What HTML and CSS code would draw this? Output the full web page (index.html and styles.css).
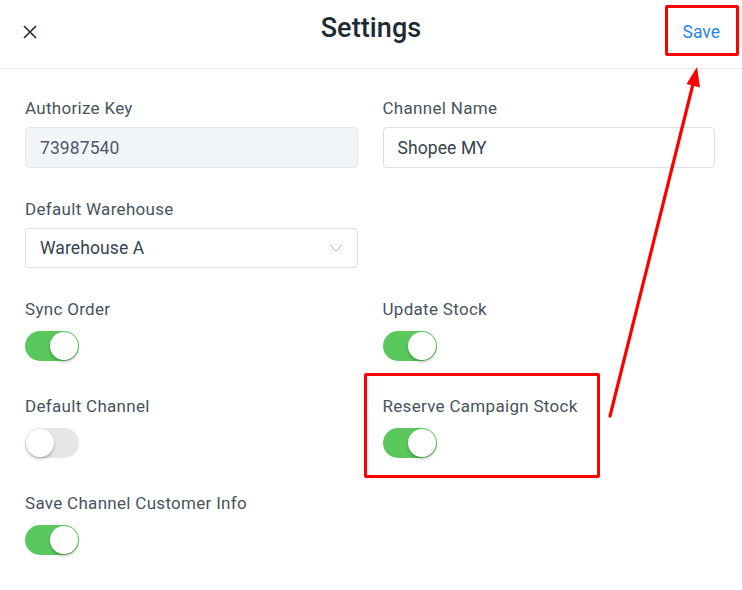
FILE: index.html
```html
<!DOCTYPE html>
<html lang="en">
<head>
	<meta charset="UTF-8">
	<title>Settings</title>
<link rel="stylesheet" href="styles.css">
</head>
<body>
<div id="page">
	<div class="head">
		<span class="close">
			<svg width="16" height="16" viewBox="0 0 16 16"><path d="M2 2L14 14M14 2L2 14" stroke="#1c2a33" stroke-width="1.6" fill="none"/></svg>
		</span>
		<h1 class="title">Settings</h1>
		<span class="save">Save</span>
	</div>

	<div class="form">
		<div class="field">
			<p class="label">Authorize Key</p>
			<div class="input readonly">73987540</div>
		</div>
		<div class="field">
			<p class="label">Channel Name</p>
			<div class="input">Shopee MY</div>
		</div>

		<div class="field">
			<p class="label">Default Warehouse</p>
			<div class="input select">Warehouse A
				<svg width="14" height="8" viewBox="0 0 14 8"><path d="M1 1L7 7L13 1" stroke="#b8bec4" stroke-width="1" fill="none"/></svg>
			</div>
		</div>
		<div class="field"></div>

		<div class="field sw">
			<p class="label">Sync Order</p>
			<span class="toggle on"><i></i></span>
		</div>
		<div class="field sw">
			<p class="label">Update Stock</p>
			<span class="toggle on"><i></i></span>
		</div>

		<div class="field sw">
			<p class="label">Default Channel</p>
			<span class="toggle"><i></i></span>
		</div>
		<div class="field sw">
			<p class="label">Reserve Campaign Stock</p>
			<span class="toggle on"><i></i></span>
		</div>

		<div class="field sw">
			<p class="label">Save Channel Customer Info</p>
			<span class="toggle on"><i></i></span>
		</div>
	</div>

	<!-- annotations -->
	<div class="mark mark-save"></div>
	<div class="mark mark-reserve"></div>
	<svg class="arrow" width="742" height="590" viewBox="0 0 742 590">
		<path d="M610 416L694 80" stroke="#ff0000" stroke-width="3.2" stroke-linecap="round" fill="none"/>
		<polygon points="697,67 686.5,84 700,87.5" fill="#ff0000"/>
	</svg>
</div>
</body>
</html>
```

FILE: styles.css
```css
*{padding:0;margin:0;box-sizing:border-box;}
body{
	font-family:Roboto,"Liberation Sans",sans-serif;
	background:#fff;
	color:#48535d;
}
#page{
	width:742px;
	height:590px;
	position:relative;
	overflow:hidden;
}
/*头部*/
.head{
	height:69px;
	border-bottom:1px solid #ebebeb;
	display:grid;
	grid-template-columns:1fr auto 1fr;
	align-items:center;
	padding:0 22px 0 22px;
}
.close{
	display:flex;
	width:16px;
	height:16px;
	margin-top:-4px;
}
.title{
	font-size:27px;
	font-weight:500;
	color:#1c2a33;
	margin-top:-12px;
	letter-spacing:0.1px;
}
.save{
	justify-self:end;
	font-size:17.5px;
	color:#1f8ae2;
	margin-top:-4px;
}
/*表单*/
.form{
	display:grid;
	grid-template-columns:1fr 1fr;
	column-gap:25px;
	padding:29px 27px 0 25px;
}
.field{
	display:flex;
	flex-direction:column;
	margin-bottom:31px;
}
.field.sw{
	margin-bottom:35px;
}
.label{
	font-size:17px;
	line-height:20px;
	letter-spacing:0.3px;
	color:#48535d;
	margin-bottom:9px;
}
.sw .label{
	margin-bottom:12px;
}
.input{
	height:41px;
	border:1px solid #dcdfe3;
	border-radius:4px;
	padding:0 14px;
	display:flex;
	align-items:center;
	font-size:17.5px;
	letter-spacing:0.1px;
	color:#36424c;
}
.input.readonly{
	background:#f3f6f9;
	border-color:#e4e8ec;
	color:#4d5b6a;
}
.input.select{
	justify-content:space-between;
	height:40px;
}
/*开关*/
.toggle{
	display:block;
	width:54px;
	height:30px;
	border-radius:15px;
	background:#e6e6e6;
	position:relative;
}
.toggle i{
	position:absolute;
	top:1px;
	left:1px;
	width:28px;
	height:28px;
	border-radius:50%;
	background:#fff;
	box-shadow:0 2px 3px rgba(0,0,0,.25);
}
.toggle.on{
	background:#5ac85c;
}
.toggle.on i{
	left:25px;
}
/*红框标注*/
.mark{
	position:absolute;
	border:3px solid #ff0000;
	border-radius:2px;
}
.mark-save{
	left:665px;
	top:5px;
	width:74px;
	height:51px;
}
.mark-reserve{
	left:364px;
	top:373px;
	width:236px;
	height:105px;
}
.arrow{
	position:absolute;
	left:0;
	top:0;
}
```
